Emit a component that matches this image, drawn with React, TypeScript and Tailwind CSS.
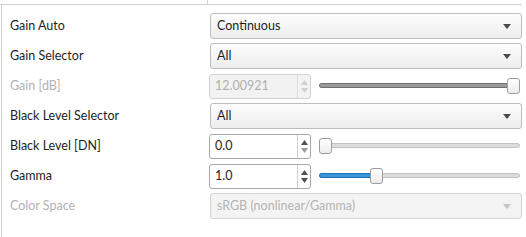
import React from 'react';

const FONT = { fontFamily: 'Lato, "Open Sans", sans-serif' };

function Arrow({ disabled }: { disabled?: boolean }) {
  return (
    <svg width="8" height="5" viewBox="0 0 8 5" className="shrink-0">
      <path d="M0 0 L8 0 L4 5 Z" fill={disabled ? '#c4c4c4' : '#4a4a4a'} />
    </svg>
  );
}

function Combo({ value, disabled }: { value: string; disabled?: boolean }) {
  return (
    <div
      className={
        'flex h-[26px] w-[312px] items-center justify-between rounded-[3px] border pl-[6px] pr-[10px] text-[12.5px] ' +
        (disabled
          ? 'border-[#d6d6d6] bg-[#f3f3f3] text-[#b4b4b4]'
          : 'border-[#bdbdbd] bg-gradient-to-b from-[#fdfdfd] to-[#ededed] text-[#1e1e1e]')
      }
    >
      <span>{value}</span>
      <Arrow disabled={disabled} />
    </div>
  );
}

function Spin({ value, disabled }: { value: string; disabled?: boolean }) {
  const c = disabled ? '#d0d0d0' : '#505050';
  const c2 = disabled ? '#d0d0d0' : '#9a9a9a';
  return (
    <div
      className={
        'flex h-[25px] w-[102px] shrink-0 rounded-[3px] border ' +
        (disabled ? 'border-[#d2d2d2] bg-[#f2f2f2] text-[#b0b0b0]' : 'border-[#a8a8a8] bg-white text-[#1e1e1e]')
      }
    >
      <div className="flex flex-1 items-center pl-[5px] text-[12.5px]">{value}</div>
      <div className={'flex w-[13px] flex-col items-center justify-center gap-[3px] border-l ' + (disabled ? 'border-[#dcdcdc]' : 'border-[#cfcfcf]')}>
        <svg width="7" height="5" viewBox="0 0 7 5">
          <path d="M0 5 L7 5 L3.5 0 Z" fill={c} />
        </svg>
        <svg width="7" height="5" viewBox="0 0 7 5">
          <path d="M0 0 L7 0 L3.5 5 Z" fill={value === '0.0' ? c2 : c} />
        </svg>
      </div>
    </div>
  );
}

function Slider({ pct, disabled }: { pct: number; disabled?: boolean }) {
  return (
    <div className="relative ml-[8px] h-[16px] w-[201px]">
      <div className="absolute left-0 right-0 top-[5px] h-[5px] rounded-full border border-[#c2c2c2] bg-[#dcdcdc]" />
      {disabled ? (
        <div className="absolute left-0 top-[5px] h-[5px] rounded-full border border-[#6f6f6f] bg-[#9a9a9a]" style={{ width: `${pct}%` }} />
      ) : pct > 0 ? (
        <div className="absolute left-0 top-[5px] h-[5px] rounded-full border border-[#1f6fae] bg-[#3a96dd]" style={{ width: `${pct}%` }} />
      ) : null}
      <div
        className={
          'absolute top-0 h-[16px] w-[13px] rounded-[3px] border bg-gradient-to-b from-white to-[#ececec] ' +
          (disabled ? 'border-[#9e9e9e]' : 'border-[#9c9c9c]')
        }
        style={{ left: `calc(${pct}% - ${(pct / 100) * 13}px)` }}
      />
    </div>
  );
}

type Row = { label: string; disabled?: boolean; combo?: string; spin?: string; pct?: number };

const ROWS: Row[] = [
  { label: 'Gain Auto', combo: 'Continuous' },
  { label: 'Gain Selector', combo: 'All' },
  { label: 'Gain [dB]', spin: '12.00921', pct: 100, disabled: true },
  { label: 'Black Level Selector', combo: 'All' },
  { label: 'Black Level [DN]', spin: '0.0', pct: 0 },
  { label: 'Gamma', spin: '1.0', pct: 27 },
  { label: 'Color Space', combo: 'sRGB (nonlinear/Gamma)', disabled: true },
];

export default function App() {
  return (
    <div className="h-[237px] w-[526px] overflow-hidden bg-white" style={FONT}>
      <div className="w-[522px]">
        {/* header strip */}
        <div className="flex h-[5px] border-b border-[#d4d4d4]">
          <div className="w-[208px] border-r border-[#d4d4d4]" />
        </div>
        <div className="ml-[1px] h-[232px] border-l border-[#cfcfcf] pt-[8px]">
          {ROWS.map((r) => (
            <div key={r.label} className="mb-[4px] flex h-[26px] items-center">
              <div className={'w-[207px] pl-[8px] text-[12.5px] ' + (r.disabled ? 'text-[#b2b2b2]' : 'text-[#1e1e1e]')}>
                {r.label}
              </div>
              {r.combo !== undefined ? (
                <div className="pl-[1px]">
                  <Combo value={r.combo} disabled={r.disabled} />
                </div>
              ) : (
                <div className="flex items-center">
                  <Spin value={r.spin!} disabled={r.disabled} />
                  <Slider pct={r.pct!} disabled={r.disabled} />
                </div>
              )}
            </div>
          ))}
        </div>
      </div>
    </div>
  );
}
